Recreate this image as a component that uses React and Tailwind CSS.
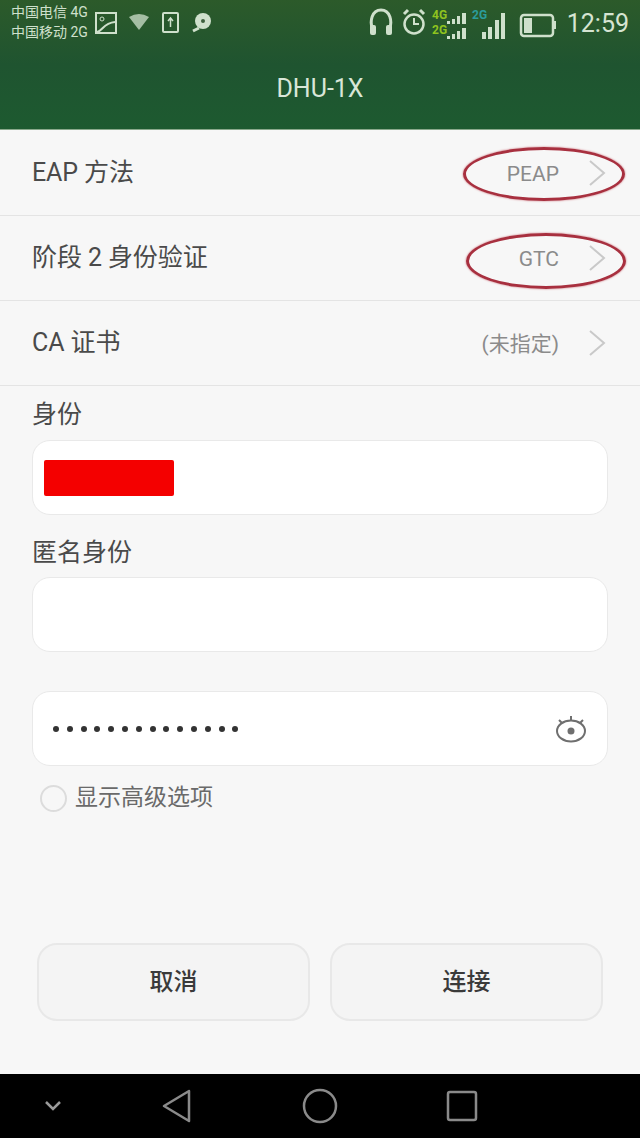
const sans = "font-['Roboto','Noto_Sans_CJK_SC',sans-serif]";

function Chevron() {
  return (
    <svg width="18" height="28" viewBox="0 0 18 28" fill="none" stroke="#c9c9c9" strokeWidth="2">
      <path d="M2 2 L16 14 L2 26" />
    </svg>
  );
}

function Row({ label, value, oval }) {
  return (
    <div className="relative h-[85px] flex items-center justify-between pl-8 pr-[34px] border-b border-[#e4e4e4] shrink-0">
      <span className="text-[25px] tracking-[-0.1px] text-[#4a4a4a]">{label}</span>
      <div className="flex items-center gap-[29px]">
        <span className="text-[21px] pt-[3px] text-[#8b8b8b]">{value}</span>
        <Chevron />
      </div>
      {oval}
    </div>
  );
}

function Oval({ className }) {
  return <div className={`absolute rounded-[50%] border-[3px] border-[#a8303f] shadow-[0_0_2px_#c9606c] ${className}`} />;
}

function StatusBar() {
  const c = "#cfe0cc";
  return (
    <div className="flex items-start justify-between px-[11px] pt-[2px] h-[46px]">
      <div className="flex items-start">
        <div className="text-[14px] leading-[20px] text-[#cfe0cc] w-[82px] whitespace-nowrap">
          <div>中国电信 4G</div>
          <div>中国移动 2G</div>
        </div>
        <svg width="124" height="26" viewBox="0 0 124 26" fill="none" stroke={c} strokeWidth="2" className="mt-[9px] ml-[1px]">
          <rect x="2" y="2" width="20" height="20" />
          <path d="M3 21 C9 20 9 12 21 11" />
          <circle cx="8" cy="8" r="2" strokeWidth="1" />
          <path d="M35 6 Q45 0 55 6 L45 19 Z" fill={c} stroke="none" opacity="0.75" />
          <rect x="69" y="2" width="15" height="19" rx="1" />
          <path d="M76.5 16 V8 M74 10 L76.5 7 L79 10" strokeWidth="1.5" />
          <circle cx="109" cy="10" r="8" fill={c} stroke="none" />
          <circle cx="109" cy="10" r="2" fill="#3d5f3d" stroke="none" />
          <path d="M99 20 L105 17" strokeWidth="3" />
        </svg>
      </div>
      <div className="flex items-start">
        <svg width="196" height="32" viewBox="0 0 196 32" fill="none" stroke={c} strokeWidth="3" className="mt-[5px] mr-[2px]">
          <path d="M4 24 C0 14 3 3 12 3 C21 3 24 14 20 24" />
          <rect x="1" y="18" width="6" height="10" rx="2" fill={c} stroke="none" />
          <rect x="17" y="18" width="6" height="10" rx="2" fill={c} stroke="none" />
          <circle cx="45" cy="17" r="9.5" strokeWidth="2.5" />
          <path d="M45 11 V17 H50" strokeWidth="2" />
          <path d="M35 7 L39 3 M55 7 L51 3" />
          <text x="63" y="12" fontSize="12" fontWeight="700" fill="#8fc31f" stroke="none">4G</text>
          <text x="63" y="27" fontSize="12" fontWeight="700" fill="#8fc31f" stroke="none">2G</text>
          <g fill={c} stroke="none">
            <rect x="78" y="14" width="3" height="3" />
            <rect x="83" y="12" width="3" height="5" />
            <rect x="88" y="9" width="3" height="8" />
            <rect x="93" y="6" width="4" height="11" />
            <rect x="78" y="29" width="3" height="3" />
            <rect x="83" y="27" width="3" height="5" />
            <rect x="88" y="24" width="3" height="8" />
            <rect x="93" y="21" width="4" height="11" />
            <rect x="113" y="25" width="4" height="7" />
            <rect x="119" y="20" width="4" height="12" />
            <rect x="126" y="13" width="4" height="19" />
            <rect x="132" y="6" width="4" height="26" />
          </g>
          <text x="103" y="12" fontSize="12" fontWeight="700" fill="#2b9c9c" stroke="none">2G</text>
          <rect x="152" y="8" width="32" height="21" rx="3" strokeWidth="2.5" />
          <rect x="155" y="11" width="8" height="15" fill={c} stroke="none" />
          <rect x="185" y="14" width="2" height="8" fill={c} stroke="none" />
        </svg>
        <span className="text-[25px] leading-[44px] text-[#d6e4d2]">12:59</span>
      </div>
    </div>
  );
}

function Field({ children }) {
  return (
    <div className="mx-8 h-[75px] shrink-0 bg-white rounded-[18px] border border-[#e9e9e9] flex items-center pl-[11px] pr-[19px]">
      {children}
    </div>
  );
}

export default function App() {
  return (
    <div className={`w-[640px] h-[1138px] flex flex-col bg-[#f7f7f7] ${sans}`}>
      <header className="h-[130px] shrink-0 bg-gradient-to-b from-[#2c5a2a] via-[#1f5430] to-[#1d5a30] border-b border-[#8aa98c]">
        <StatusBar />
        <div className="text-center text-[25px] leading-[30px] mt-[28px] text-[#d9e6d8]">DHU-1X</div>
      </header>

      <div className="mt-px flex flex-col">
        <Row
          label="EAP 方法"
          value="PEAP"
          oval={<Oval className="left-[463px] top-[16px] w-[162px] h-[54px]" />}
        />
        <Row
          label="阶段 2 身份验证"
          value="GTC"
          oval={<Oval className="left-[466px] top-[17px] w-[160px] h-[56px]" />}
        />
        <Row label="CA 证书" value="(未指定)" />
      </div>

      <div className="pl-8 text-[25px] leading-[32px] text-[#4a4a4a] mt-[13px] mb-[9px]">身份</div>
      <Field>
        <div className="w-[130px] h-[36px] bg-[#f40000] rounded-[2px]" />
      </Field>

      <div className="pl-8 text-[25px] leading-[32px] text-[#4a4a4a] mt-[22px] mb-[8px]">匿名身份</div>
      <Field />

      <div className="mt-[39px]">
        <Field>
          <span className="ml-[9px] flex-1 flex gap-[7.8px]">
            {Array.from({ length: 14 }).map((_, i) => (
              <i key={i} className="w-[6px] h-[6px] rounded-full bg-[#333333]" />
            ))}
          </span>
          <svg width="34" height="32" viewBox="0 0 34 32" fill="none" stroke="#6f6f6f" strokeWidth="2">
            <ellipse cx="17" cy="18" rx="14" ry="10.5" />
            <circle cx="17" cy="18" r="3.5" fill="#6f6f6f" stroke="none" />
            <path d="M17 7 V3 M8 10 L5 7 M26 10 L29 7" />
          </svg>
        </Field>
      </div>

      <div className="flex items-center ml-10 mt-[17px]">
        <div className="w-[27px] h-[27px] rounded-full border-2 border-[#dcdcdc]" />
        <span className="ml-2 text-[23px] leading-[30px] text-[#6a6a6a]">显示高级选项</span>
      </div>

      <div className="flex gap-5 pl-[37px] mt-[130px]">
        <button type="button" className="w-[273px] h-[78px] rounded-[20px] border-2 border-[#e8e8e8] bg-[#f4f4f4] text-[24px] font-medium text-[#3a3a3a]">取消</button>
        <button type="button" className="w-[273px] h-[78px] rounded-[20px] border-2 border-[#e8e8e8] bg-[#f4f4f4] text-[24px] font-medium text-[#3a3a3a]">连接</button>
      </div>

      <nav className="mt-auto h-[64px] shrink-0 bg-black">
        <svg width="640" height="64" viewBox="0 0 640 64" fill="none" stroke="#8a8a8a" strokeWidth="2.5">
          <path d="M46 28 L53 35 L60 28" stroke="#9a9a9a" />
          <path d="M189 17 L164 32 L189 47 Z" strokeLinejoin="round" />
          <ellipse cx="320" cy="32" rx="16" ry="16" />
          <rect x="448" y="18" width="28" height="28" rx="2" />
        </svg>
      </nav>
    </div>
  );
}
